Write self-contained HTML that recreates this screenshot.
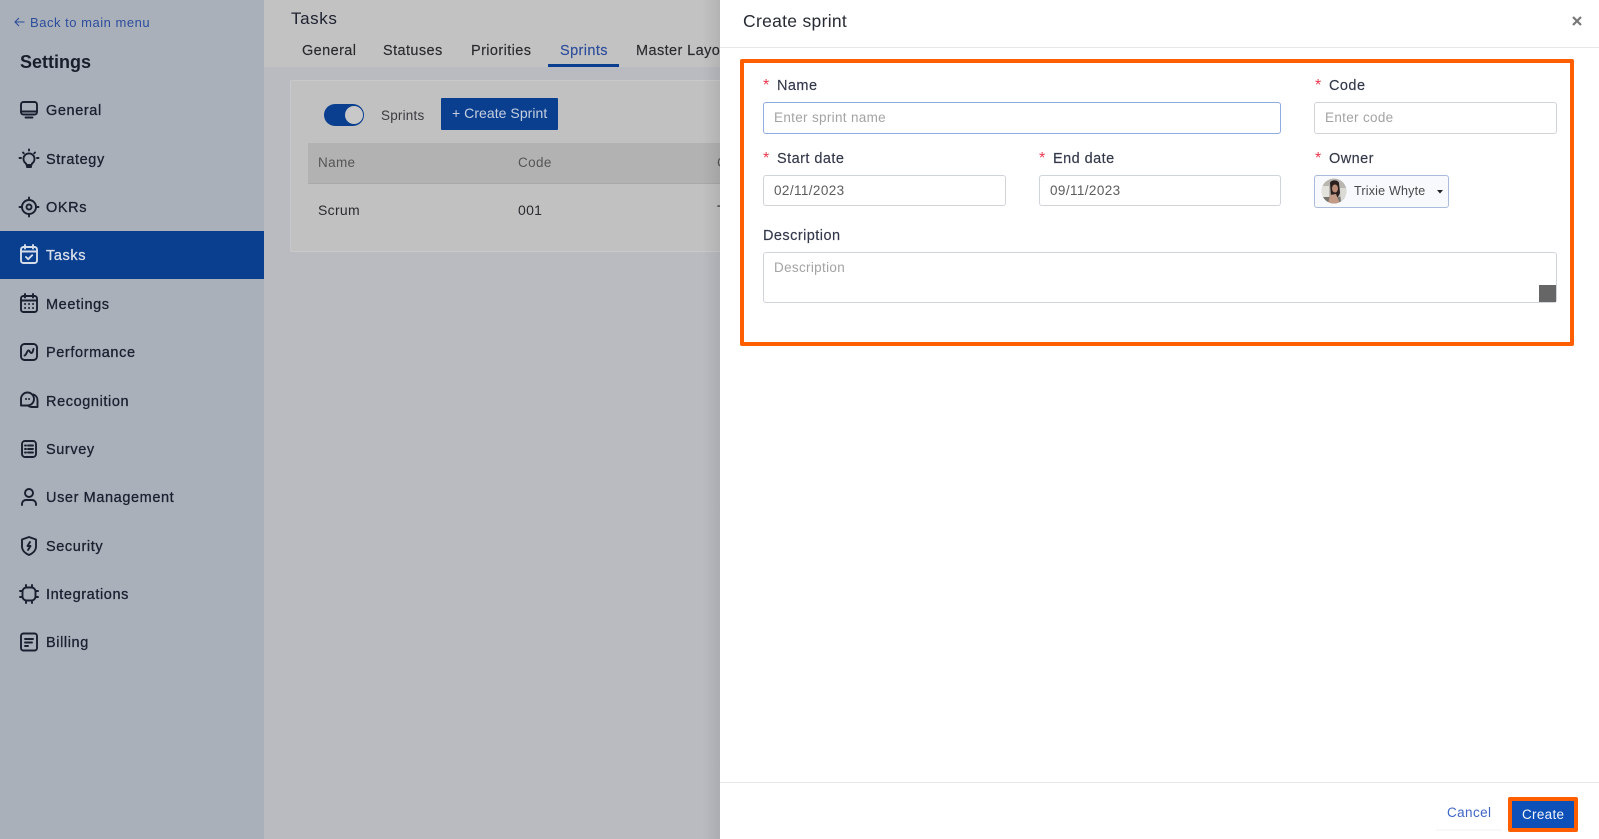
<!DOCTYPE html>
<html lang="en">
<head>
<meta charset="utf-8">
<title>Create sprint</title>
<style>
html,body{margin:0;padding:0;width:1599px;height:839px;overflow:hidden;background:#b9bbc1;font-family:"Liberation Sans",sans-serif;}
#root{position:relative;width:1599px;height:839px;overflow:hidden;}
.a{position:absolute;box-sizing:border-box;}
.t{position:absolute;white-space:nowrap;line-height:20px;height:20px;}
.m{font-size:14.5px;color:#1a2030;letter-spacing:.6px;left:46px;-webkit-text-stroke:.3px currentColor;}
.tab{font-size:14.5px;color:#2a2a2e;letter-spacing:.4px;top:41px;-webkit-text-stroke:.15px currentColor;}
.l{font-size:14.5px;color:#33384a;letter-spacing:.45px;-webkit-text-stroke:.15px currentColor;}
.s{font-size:16px;color:#e8384f;}
.p{font-size:13.5px;color:#a3a3a3;letter-spacing:.32px;}
.i{border:1px solid #d0d4db;border-radius:3px;background:#fff;}
svg.ic{position:absolute;left:18px;width:22px;height:22px;fill:none;stroke:#1a2030;stroke-width:1.9;stroke-linecap:round;stroke-linejoin:round;}
</style>
</head>
<body>
<div id="root">
  <!-- sidebar -->
  <div class="a" style="left:0;top:0;width:264px;height:839px;background:#a9b0ba"></div>
  <svg class="a" style="left:14px;top:17px;width:11px;height:10px" viewBox="0 0 11 10"><path d="M10.500 5H1M5 1L1 5l4 4" fill="none" stroke="#2c4d9c" stroke-width="1.100"/></svg>
  <div class="t" style="left:30px;top:13px;font-size:13px;color:#2c4d9c;letter-spacing:.52px">Back to main menu</div>
  <div class="t" style="left:20px;top:52px;font-size:18px;font-weight:bold;color:#191e2b">Settings</div>

  <div class="a" style="left:0;top:231px;width:264px;height:48px;background:#0a3f90"></div>

  <svg class="ic" style="top:99px" viewBox="0 0 22 22"><rect x="3" y="3" width="16" height="12.500" rx="2.500"/><path d="M3 12.500h16M7.500 18.500h7"/></svg>
  <div class="t m" style="top:101px">General</div>

  <svg class="ic" style="top:148px" viewBox="0 0 22 22"><path d="M8 15.500a5.500 5.500 0 1 1 6 0l-.5 1.500h-5zM9 17v2h4v-2M11 1.500v1M3 10H1.500M20.500 10H19M5 4.500l.8.8M17 4.500l-.8.8"/></svg>
  <div class="t m" style="top:150px">Strategy</div>

  <svg class="ic" style="top:196px" viewBox="0 0 22 22"><circle cx="11" cy="11" r="7"/><circle cx="11" cy="11" r="2.500"/><path d="M11 1.500V4M11 18v2.500M1.500 11H4M18 11h2.500"/></svg>
  <div class="t m" style="top:198px">OKRs</div>

  <svg class="ic" style="top:243px;stroke:#d5dde9" viewBox="0 0 22 22"><rect x="3" y="4" width="16" height="16" rx="2.500"/><path d="M3 8.500h16M7 2v3.500M15 2v3.500M8 14l2.200 2.200 4-4"/></svg>
  <div class="t m" style="top:246px;color:#d9dfea">Tasks</div>

  <svg class="ic" style="top:292px" viewBox="0 0 22 22"><rect x="3" y="4" width="16" height="16" rx="2.500"/><path d="M3 8.500h16M7 2v3.500M15 2v3.500M7 12h.1M11 12h.1M15 12h.1M7 16h.1M11 16h.1M15 16h.1"/></svg>
  <div class="t m" style="top:295px">Meetings</div>

  <svg class="ic" style="top:341px" viewBox="0 0 22 22"><rect x="3" y="3" width="16" height="16" rx="3.500"/><path d="M6.500 14.500c2-.5 2.500-5 4-5s1.500 3 3 2.500 1.500-3 2-4"/></svg>
  <div class="t m" style="top:343px">Performance</div>

  <svg class="ic" style="top:389px" viewBox="0 0 22 22"><path d="M3 16.500h6.500a6.500 6.500 0 1 0-6.500-6.500zM15.500 5.500a6 6 0 0 1 4 5.500v7h-6a5 5 0 0 1-3-1M8 10h.1M11 10h.1"/></svg>
  <div class="t m" style="top:392px">Recognition</div>

  <svg class="ic" style="top:438px" viewBox="0 0 22 22"><rect x="4" y="3" width="14" height="16" rx="3"/><path d="M7 7.500h1M10 7.500h5M7 11h1M10 11h5M7 14.500h1M10 14.500h5"/></svg>
  <div class="t m" style="top:440px">Survey</div>

  <svg class="ic" style="top:486px" viewBox="0 0 22 22"><circle cx="11" cy="7" r="4"/><path d="M4 19v-1.500a4 4 0 0 1 4-3.500h6a4 4 0 0 1 4 3.500V19"/></svg>
  <div class="t m" style="top:488px">User Management</div>

  <svg class="ic" style="top:535px" viewBox="0 0 22 22"><path d="M11 2l7 2.500v7c0 4-3.500 7-7 8.500-3.500-1.500-7-4.500-7-8.500v-7zM12 7l-2.500 4h3L10 15"/></svg>
  <div class="t m" style="top:537px">Security</div>

  <svg class="ic" style="top:583px" viewBox="0 0 22 22"><rect x="4.500" y="4.500" width="13" height="13" rx="4"/><path d="M8 2v2.500M14 2v2.500M8 17.500V20M14 17.500V20M2 8h2.500M2 14h2.500M17.500 8H20M17.500 14H20"/></svg>
  <div class="t m" style="top:585px">Integrations</div>

  <svg class="ic" style="top:631px" viewBox="0 0 22 22"><rect x="3" y="2.500" width="16" height="17" rx="2.500"/><path d="M7 8h8M7 11.500h7M7 15h3"/></svg>
  <div class="t m" style="top:633px">Billing</div>

  <!-- main backdrop -->
  <div class="a" style="left:264px;top:0;width:456px;height:67px;background:#c2c2c2"></div>
  <div class="t" style="left:291px;top:9px;font-size:17px;color:#1d2130;letter-spacing:.6px">Tasks</div>
  <div class="t tab" style="left:302px">General</div>
  <div class="t tab" style="left:383px">Statuses</div>
  <div class="t tab" style="left:471px">Priorities</div>
  <div class="t tab" style="left:560px;color:#2c4d9c">Sprints</div>
  <div class="t tab" style="left:636px">Master Layouts</div>
  <div class="a" style="left:548px;top:64px;width:71px;height:3px;background:#0a3f90"></div>

  <div class="a" style="left:290px;top:80px;width:440px;height:172px;background:#c1c1c1;border:1px solid #c9c9c9;border-radius:2px"></div>
  <div class="a" style="left:324px;top:104px;width:40px;height:22px;border-radius:11px;background:#0a3f90"></div>
  <div class="a" style="left:345px;top:106px;width:18px;height:18px;border-radius:50%;background:#c8c8c8"></div>
  <div class="t" style="left:381px;top:106px;font-size:13.500px;color:#3a3a40;letter-spacing:.2px">Sprints</div>
  <div class="a" style="left:441px;top:98px;width:117px;height:32px;background:#0a3f90;border-radius:1px"></div>
  <div class="t" style="left:452px;top:103px;font-size:14px;color:#c6cfdf;letter-spacing:.05px">+ Create Sprint</div>
  <div class="a" style="left:308px;top:143px;width:412px;height:41px;background:#b2b2b2;border-bottom:1px solid #a9a9a9"></div>
  <div class="t" style="left:318px;top:153px;font-size:13.500px;color:#555;letter-spacing:.35px">Name</div>
  <div class="t" style="left:518px;top:153px;font-size:13.500px;color:#555;letter-spacing:.35px">Code</div>
  <div class="t" style="left:717px;top:153px;font-size:13.500px;color:#555">C</div>
  <div class="t" style="left:318px;top:200px;font-size:14px;color:#2b2b30;letter-spacing:.3px">Scrum</div>
  <div class="t" style="left:518px;top:200px;font-size:14px;color:#2b2b30;letter-spacing:.3px">001</div>
  <div class="t" style="left:717px;top:200px;font-size:14px;color:#2b2b30">T</div>

  <!-- panel shadow -->
  <div class="a" style="left:702px;top:0;width:18px;height:839px;background:linear-gradient(to right,rgba(0,0,0,0),rgba(0,0,0,.08))"></div>

  <!-- panel -->
  <div class="a" style="left:720px;top:0;width:879px;height:839px;background:#fff"></div>
  <div class="t" style="left:743px;top:11px;font-size:17.500px;color:#262a33;letter-spacing:.3px">Create sprint</div>
  <div class="a" style="left:720px;top:47px;width:879px;height:1px;background:#e7e7e7"></div>
  <svg class="a" style="left:1572px;top:16px;width:10px;height:10px" viewBox="0 0 10 10"><path d="M1 1l8 8M9 1l-8 8" stroke="#777" stroke-width="2.200" fill="none"/></svg>

  <!-- orange highlight -->
  <div class="a" style="left:740px;top:59px;width:834px;height:287px;border:4px solid #ff5f00;border-radius:2px"></div>

  <div class="t s" style="left:763px;top:76px">*</div>
  <div class="t l" style="left:777px;top:76px">Name</div>
  <div class="a i" style="left:763px;top:102px;width:518px;height:32px;border-color:#8fabdf"></div>
  <div class="t p" style="left:774px;top:108px">Enter sprint name</div>

  <div class="t s" style="left:1315px;top:76px">*</div>
  <div class="t l" style="left:1329px;top:76px">Code</div>
  <div class="a i" style="left:1314px;top:102px;width:243px;height:32px"></div>
  <div class="t p" style="left:1325px;top:108px">Enter code</div>

  <div class="t s" style="left:763px;top:149px">*</div>
  <div class="t l" style="left:777px;top:149px">Start date</div>
  <div class="a i" style="left:763px;top:175px;width:243px;height:31px"></div>
  <div class="t p" style="left:774px;top:181px;color:#5c5c5c;letter-spacing:.4px">02/11/2023</div>

  <div class="t s" style="left:1039px;top:149px">*</div>
  <div class="t l" style="left:1053px;top:149px">End date</div>
  <div class="a i" style="left:1039px;top:175px;width:242px;height:31px"></div>
  <div class="t p" style="left:1050px;top:181px;color:#5c5c5c;letter-spacing:.4px">09/11/2023</div>

  <div class="t s" style="left:1315px;top:149px">*</div>
  <div class="t l" style="left:1329px;top:149px">Owner</div>
  <div class="a" style="left:1314px;top:175px;width:135px;height:33px;background:#f7f9fc;border:1px solid #a9bcdc;border-radius:3px"></div>
  <svg class="a" style="left:1321px;top:178px;width:26px;height:26px" viewBox="0 0 26 26">
    <defs><clipPath id="av"><circle cx="13" cy="13" r="12.500"/></clipPath></defs>
    <g clip-path="url(#av)">
      <rect width="26" height="26" fill="#b9b6b0"/>
      <rect x="0" y="8" width="8" height="11" fill="#e4e2dd"/>
      <rect x="0" y="19" width="26" height="7" fill="#77746e"/>
      <path d="M9 5c0-3 8-4 9 0l1 10-2 4H10z" fill="#2a1f1d"/>
      <ellipse cx="14" cy="10.500" rx="3" ry="4" fill="#b98a74"/>
      <path d="M9 17l6-1 4 10H7z" fill="#c29a86"/>
      <path d="M19 10h7v16h-6z" fill="#dcdad5"/>
    </g>
  </svg>
  <div class="t" style="left:1354px;top:181px;font-size:12.500px;color:#4a4a4a;letter-spacing:.2px">Trixie Whyte</div>
  <svg class="a" style="left:1437px;top:190px;width:6px;height:4px" viewBox="0 0 6 4"><path d="M0 0h6L3 3.500z" fill="#222"/></svg>

  <div class="t l" style="left:763px;top:226px">Description</div>
  <div class="a i" style="left:763px;top:252px;width:794px;height:51px"></div>
  <div class="t p" style="left:774px;top:258px">Description</div>
  <div class="a" style="left:1539px;top:285px;width:17px;height:17px;background:#666"></div>

  <!-- footer -->
  <div class="a" style="left:720px;top:782px;width:879px;height:1px;background:#e7e7e7"></div>
  <div class="t" style="left:1447px;top:803px;font-size:13.500px;color:#3f66c4;letter-spacing:.4px">Cancel</div>
  <div class="a" style="left:1436px;top:829px;width:66px;height:2px;background:#f8f8f8"></div>
  <div class="a" style="left:1508px;top:797px;width:70px;height:35px;background:#0d50b8;border:4px solid #ff5f00;border-radius:2px"></div>
  <div class="t" style="left:1522px;top:805px;font-size:13.500px;color:#f2f5fb;letter-spacing:.3px">Create</div>
</div>
</body>
</html>
